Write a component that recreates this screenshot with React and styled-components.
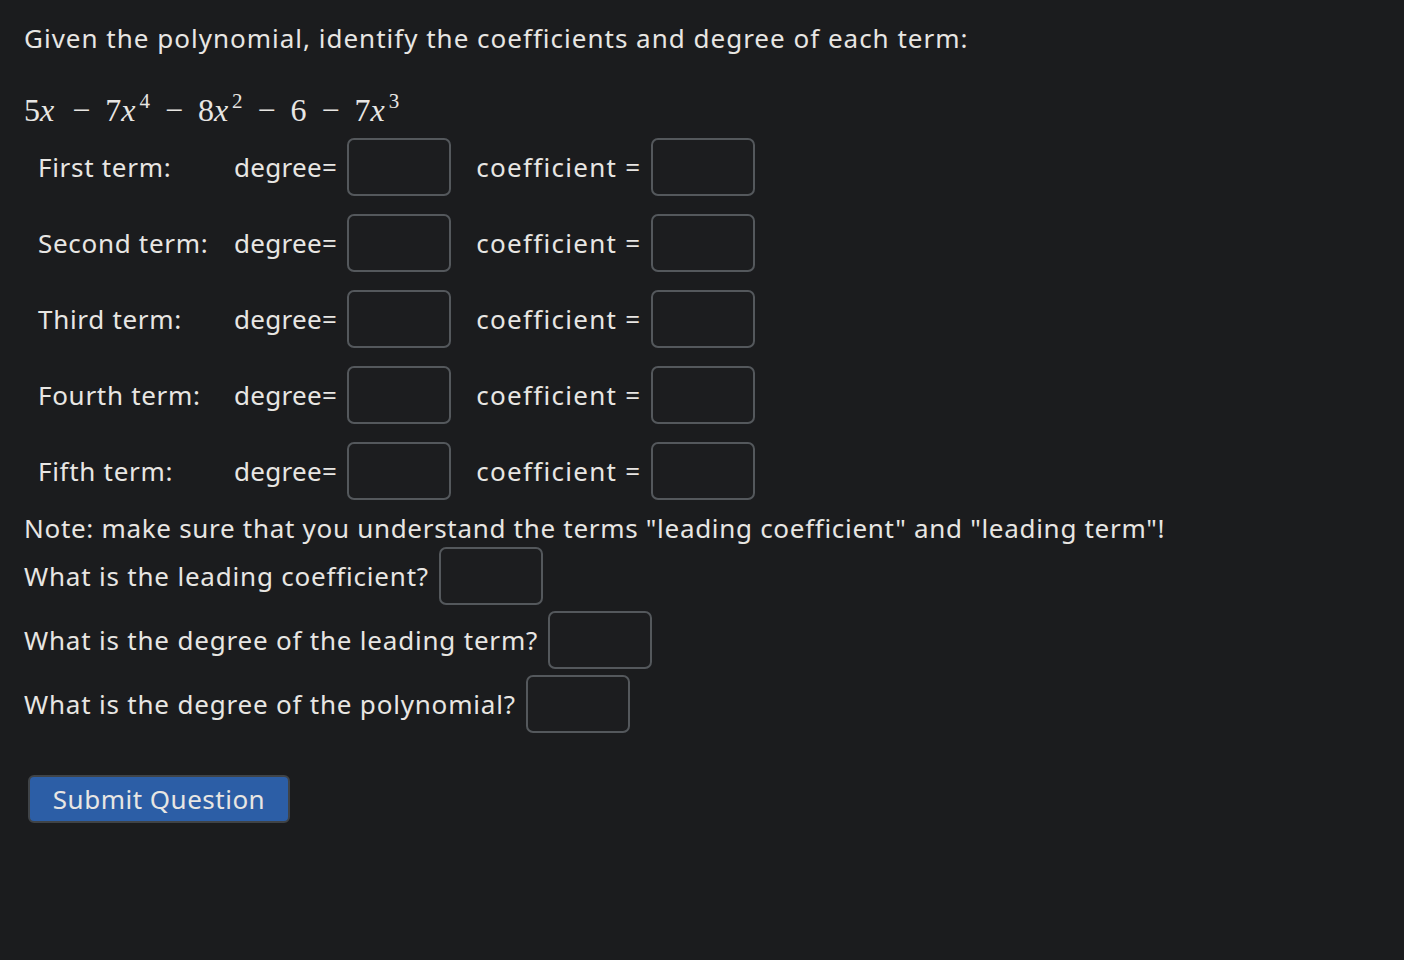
import React from "react"
import styled, { createGlobalStyle } from "styled-components"

const Global = createGlobalStyle`
  html, body {
    margin: 0;
    background: #1b1c1e;
  }
  body {
    color: #e8e6e3;
    font-family: "Noto Sans", "Open Sans", sans-serif;
  }
`

const Page = styled.div`
  min-height: 960px;
  padding: 20px 24px;
  box-sizing: border-box;
`

const Heading = styled.p`
  margin: 0 0 36px;
  font-size: 26px;
  line-height: 36px;
  letter-spacing: 1px;
`

const Math = styled.div`
  font-family: "Liberation Serif", "DejaVu Serif", serif;
  font-size: 32px;
  line-height: 36px;
  margin-bottom: 10px;
  white-space: nowrap;
  .v { font-style: italic; margin-right: 3px; }
  sup { font-size: 21px; vertical-align: 13px; line-height: 0; margin-left: 1px; }
`

const Op = styled.span`
  display: inline-block;
  width: 24px;
  margin: 0 12px;
  text-align: center;
`

const Terms = styled.div`
  display: grid;
  grid-template-columns: 196px auto auto auto auto;
  justify-content: start;
  align-items: center;
  row-gap: 18px;
  margin-left: 14px;
  font-size: 26px;
`

const Label = styled.span`
  white-space: nowrap;
  letter-spacing: ${p => p.$ls ?? 0.5}px;
  margin-right: ${p => p.$gap || 0}px;
`

const Box = styled.span`
  display: inline-block;
  width: 104px;
  height: 58px;
  box-sizing: border-box;
  border: 2px solid #54585c;
  border-radius: 7px;
  background: #1c1d1f;
  vertical-align: middle;
  margin-right: ${p => p.$gap || 0}px;
`

const Note = styled.p`
  margin: 10px 0 1px;
  font-size: 26px;
  line-height: 36px;
  letter-spacing: 0.7px;
`

const Question = styled.div`
  display: flex;
  align-items: center;
  gap: 10px;
  margin-bottom: 6px;
  font-size: 26px;
  letter-spacing: 0.8px;
`

const Submit = styled.button`
  margin: 36px 0 0 4px;
  width: 262px;
  height: 48px;
  background: #2c5ea6;
  color: #e8e6e3;
  border: 2px solid #3f4347;
  border-radius: 6px;
  font-family: "Noto Sans", sans-serif;
  font-size: 26px;
  letter-spacing: 0.5px;
  padding: 0;
`

const terms = ["First", "Second", "Third", "Fourth", "Fifth"]

export default function App() {
  return (
    <Page>
      <Global />
      <Heading>Given the polynomial, identify the coefficients and degree of each term:</Heading>
      <Math>
        5<span className="v">x</span>
        <Op>−</Op>7<span className="v">x</span><sup>4</sup>
        <Op>−</Op>8<span className="v">x</span><sup>2</sup>
        <Op>−</Op>6
        <Op>−</Op>7<span className="v">x</span><sup>3</sup>
      </Math>
      <Terms>
        {terms.map(t => (
          <React.Fragment key={t}>
            <Label $ls={0.7}>{t} term:</Label>
            <Label $gap={10} $ls={0.3}>degree=</Label>
            <Box $gap={25} />
            <Label $gap={10} $ls={1.3}>coefficient =</Label>
            <Box />
          </React.Fragment>
        ))}
      </Terms>
      <Note>Note: make sure that you understand the terms "leading coefficient" and "leading term"!</Note>
      <Question>What is the leading coefficient? <Box /></Question>
      <Question>What is the degree of the leading term? <Box /></Question>
      <Question>What is the degree of the polynomial? <Box /></Question>
      <Submit>Submit Question</Submit>
    </Page>
  )
}
